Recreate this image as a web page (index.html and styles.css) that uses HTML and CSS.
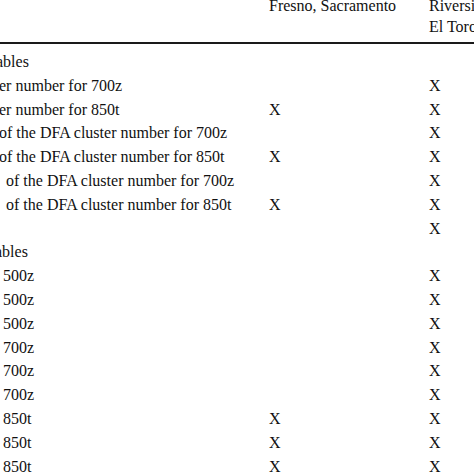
FILE: index.html
```html
<!DOCTYPE html>
<html>
<head>
<meta charset="utf-8">
<link rel="stylesheet" href="styles.css">
</head>
<body>
<div class="page">
<table class="tbl">
  <colgroup>
    <col class="c-label">
    <col class="c-mid">
    <col class="c-right">
  </colgroup>
  <thead>
    <tr>
      <th></th>
      <th>Fresno, Sacramento</th>
      <th>Riverside,<br>El Toro</th>
    </tr>
  </thead>
  <tbody>
    <tr class="first"><td class="cut4">ables</td><td></td><td></td></tr>
    <tr><td class="cut1">er number for 700z</td><td></td><td>X</td></tr>
    <tr><td class="cut1">er number for 850t</td><td>X</td><td>X</td></tr>
    <tr><td class="cut1">of the DFA cluster number for 700z</td><td></td><td>X</td></tr>
    <tr><td class="cut1">of the DFA cluster number for 850t</td><td>X</td><td>X</td></tr>
    <tr><td class="ind6">of the DFA cluster number for 700z</td><td></td><td>X</td></tr>
    <tr><td class="ind6">of the DFA cluster number for 850t</td><td>X</td><td>X</td></tr>
    <tr><td></td><td></td><td>X</td></tr>
    <tr><td class="cut5">ables</td><td></td><td></td></tr>
    <tr><td class="ind3">500z</td><td></td><td>X</td></tr>
    <tr><td class="ind3">500z</td><td></td><td>X</td></tr>
    <tr><td class="ind3">500z</td><td></td><td>X</td></tr>
    <tr><td class="ind3">700z</td><td></td><td>X</td></tr>
    <tr><td class="ind3">700z</td><td></td><td>X</td></tr>
    <tr><td class="ind3">700z</td><td></td><td>X</td></tr>
    <tr><td class="ind3">850t</td><td>X</td><td>X</td></tr>
    <tr><td class="ind3">850t</td><td>X</td><td>X</td></tr>
    <tr><td class="ind3">850t</td><td>X</td><td>X</td></tr>
  </tbody>
</table>
</div>
</body>
</html>
```
FILE: styles.css
```css
html, body {
  margin: 0;
  padding: 0;
  background: #ffffff;
  overflow: hidden;
}
.page {
  width: 474px;
  height: 474px;
  overflow: hidden;
  font-family: "Liberation Serif", "Times New Roman", serif;
  font-size: 16px;
  color: #111111;
}
.tbl {
  border-collapse: collapse;
  table-layout: fixed;
  width: 520px;
  margin-top: -5px;
}
.c-label { width: 269px; }
.c-mid { width: 160px; }
.c-right { width: 91px; }
.tbl th {
  font-weight: normal;
  text-align: left;
  vertical-align: top;
  line-height: 21px;
  padding: 0 0 5px 0;
  border-bottom: 2px solid #1a1a1a;
  white-space: nowrap;
}
.tbl td {
  padding: 0;
  line-height: 23.8px;
  height: 23.8px;
  white-space: nowrap;
  vertical-align: top;
}
.tbl tr.first td {
  padding-top: 6px;
}
.cut1 { text-indent: -1px; }
.cut4 { text-indent: -4px; }
.cut5 { text-indent: -5px; }
.ind3 { padding-left: 3px !important; }
.ind6 { padding-left: 6px !important; }
```
